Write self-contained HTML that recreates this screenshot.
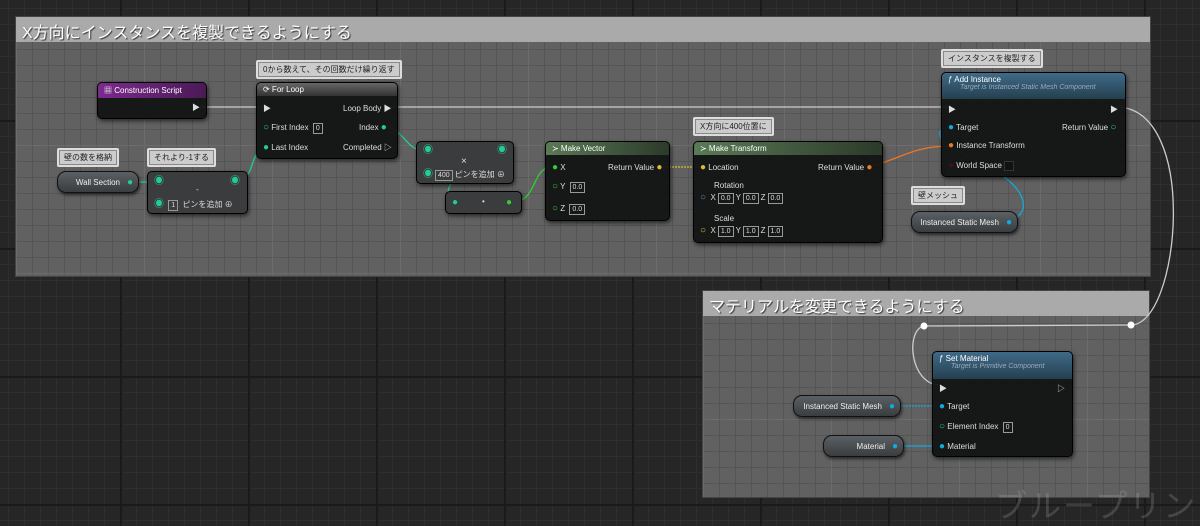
<!DOCTYPE html><html><head><meta charset="utf-8"><style>
*{margin:0;padding:0;box-sizing:border-box}
body{width:1200px;height:526px;overflow:hidden;position:relative;font-family:"Liberation Sans","Noto Sans CJK JP",sans-serif;color:#ddd;
background-color:#262626;
background-image:linear-gradient(#1a1a1a 2px,transparent 2px),linear-gradient(90deg,#1a1a1a 2px,transparent 2px),linear-gradient(#2e2e2e 1px,transparent 1px),linear-gradient(90deg,#2e2e2e 1px,transparent 1px);
background-size:128px 128px,128px 128px,16px 16px,16px 16px;background-position:-8px -8px}
.a{position:absolute}
.cb{position:absolute;background-color:#616161;background-image:linear-gradient(#6c6c6c 1px,transparent 1px),linear-gradient(90deg,#6c6c6c 1px,transparent 1px),linear-gradient(#555 1px,transparent 1px),linear-gradient(90deg,#555 1px,transparent 1px);background-size:128px 128px,128px 128px,16px 16px,16px 16px;box-shadow:0 0 0 1px #444}
.ch{position:absolute;left:0;right:0;top:0;height:25px;background:#aaaaaa;color:#fff;font-size:16px;padding:2px 6px;text-shadow:1px 1px 1px #333;white-space:nowrap}
.n{position:absolute;background:rgba(18,20,20,.95);border:1px solid #000;border-radius:5px;box-shadow:1px 2px 4px rgba(0,0,0,.6);font-size:8px;color:#ddd}
.h{position:absolute;left:0;right:0;top:0;border-radius:4px 4px 0 0;color:#fff;font-size:8px;padding:2px 6px}
.pill{position:absolute;border-radius:9px;background:linear-gradient(#5a6064,#3a3d3f);border:1px solid #111;box-shadow:1px 2px 3px rgba(0,0,0,.6);font-size:8px;color:#eee;text-align:right;padding:6px 18px 0 0}
.cm{position:absolute;background:#ddd;border-radius:2px;padding:2px;font-size:8px;color:#222}
.cm span{display:block;border:1px solid #888;background:#ccc;padding:1px 4px;white-space:nowrap}
.t{position:absolute;font-size:8px;white-space:nowrap}
.t span:first-child,.p{font-size:10px;line-height:8px}
.bx{display:inline-block;border:1px solid #999;padding:0 2px;font-size:7px !important;margin:0 2px;line-height:9px}
</style></head><body>
<div class="cb" style="left:16px;top:17px;width:1134px;height:259px"><div class="ch">X方向にインスタンスを複製できるようにする</div></div>
<div class="cb" style="left:703px;top:291px;width:446px;height:206px"><div class="ch">マテリアルを変更できるようにする</div></div>

<svg class="a" style="left:0;top:0" width="1200" height="526">
<g fill="none" stroke-width="1.3">
<path d="M200 107 L265 107" stroke="#ccc"/>
<path d="M390 107 L950 107" stroke="#ccc"/>
<path d="M1116 107 C1200 107,1180 325,1131 325 L924 326 C905 330,910 385,940 385" stroke="#ccc"/>
<path d="M127 182 L160 182" stroke="#2c9"/>
<path d="M233 182 C260 180,245 150,268 149" stroke="#2c9"/>
<path d="M386 127 C405 130,405 150,425 151" stroke="#2c9"/>
<path d="M505 151 C525 155,460 172,450 185 C445 195,452 203,458 204" stroke="#2c9"/>
<path d="M512 203 C540 200,530 165,555 167" stroke="#3c3"/>
<path d="M657 167 L705 167" stroke="#db3" stroke-dasharray="2 1"/>
<path d="M868 167 C900 160,910 146,952 146" stroke="#e72"/>
<path d="M952 127 C935 127,930 140,975 160 C1030 185,1035 215,1006 222" stroke="#1ad"/>
<path d="M888 406 L943 406" stroke="#1ad" stroke-dasharray="2 1"/>
<path d="M890 446 L943 446" stroke="#1ad"/>
</g>
<circle cx="924" cy="326" r="3.5" fill="#fff"/><circle cx="1131" cy="325" r="3.5" fill="#fff"/>
</svg>

<div class="n" style="left:97px;top:82px;width:110px;height:37px"><div class="h" style="background:linear-gradient(90deg,#7b2a8c,#4a1a55)">▦ Construction Script</div><div class="t" style="left:94px;top:19px">▶</div></div>
<div class="cm" style="left:256px;top:60px"><span>0から数えて、その回数だけ繰り返す</span></div>
<div class="n" style="left:256px;top:82px;width:142px;height:77px"><div class="h" style="background:linear-gradient(#666,#333)">⟳ For Loop</div>
<div class="t" style="left:6px;top:20px">▶</div><div class="t" style="left:86px;top:20px">Loop Body ▶</div>
<div class="t" style="left:6px;top:40px"><span style="color:#2c9">○</span> First Index <span class="bx">0</span></div><div class="t" style="left:102px;top:40px">Index <span class="p" style="color:#2c9">●</span></div>
<div class="t" style="left:6px;top:60px"><span style="color:#2c9">●</span> Last Index</div><div class="t" style="left:86px;top:59px">Completed ▷</div></div>
<div class="cm" style="left:57px;top:148px"><span>壁の数を格納</span></div>
<div class="pill" style="left:57px;top:171px;width:82px;height:22px">Wall Section <span class="p" style="color:#2c9;position:absolute;right:5px;top:7px">●</span></div>
<div class="cm" style="left:147px;top:148px"><span>それより-1する</span></div>
<div class="n" style="left:147px;top:171px;width:101px;height:43px;background:#3a3c3d">
<div class="t p" style="left:6px;top:6px;color:#2c9">◉</div><div class="t p" style="left:82px;top:6px;color:#2c9">◉</div><div class="t" style="left:48px;top:13px">-</div>
<div class="t" style="left:6px;top:27px"><span style="color:#2c9">◉</span> <span class="bx">1</span> ピンを追加 ⊕</div></div>
<div class="n" style="left:416px;top:141px;width:98px;height:43px;background:#3a3c3d">
<div class="t p" style="left:6px;top:5px;color:#2c9">◉</div><div class="t p" style="left:80px;top:5px;color:#2c9">◉</div><div class="t" style="left:44px;top:14px;font-size:10px">×</div>
<div class="t" style="left:6px;top:27px"><span style="color:#2c9">◉</span><span class="bx">400</span>ピンを追加 ⊕</div></div>
<div class="n" style="left:445px;top:191px;width:77px;height:23px;background:#3a3c3d"><div class="t p" style="left:6px;top:7px;color:#2c9">●</div><div class="t" style="left:36px;top:5px">•</div><div class="t p" style="left:60px;top:7px;color:#3c3">●</div></div>
<div class="n" style="left:545px;top:141px;width:125px;height:80px"><div class="h" style="background:linear-gradient(90deg,#5a7a55,#2c3a2a)">≻ Make Vector</div>
<div class="t" style="left:6px;top:21px"><span style="color:#3c3">●</span> X</div><div class="t" style="left:62px;top:21px">Return Value <span class="p" style="color:#db3">●</span></div>
<div class="t" style="left:6px;top:40px"><span style="color:#3c3">○</span> Y <span class="bx">0.0</span></div>
<div class="t" style="left:6px;top:62px"><span style="color:#3c3">○</span> Z <span class="bx">0.0</span></div></div>
<div class="cm" style="left:693px;top:117px"><span>X方向に400位置に</span></div>
<div class="n" style="left:693px;top:141px;width:190px;height:102px"><div class="h" style="background:linear-gradient(90deg,#5a7a55,#2c3a2a)">≻ Make Transform</div>
<div class="t" style="left:6px;top:21px"><span style="color:#db3">●</span> Location</div><div class="t" style="left:124px;top:21px">Return Value <span class="p" style="color:#e72">●</span></div>
<div class="t" style="left:20px;top:39px">Rotation</div><div class="t" style="left:6px;top:51px"><span style="color:#68c">○</span> &nbsp;X<span class="bx">0.0</span>Y<span class="bx">0.0</span>Z<span class="bx">0.0</span></div>
<div class="t" style="left:20px;top:72px">Scale</div><div class="t" style="left:6px;top:84px"><span style="color:#db3">○</span> &nbsp;X<span class="bx">1.0</span>Y<span class="bx">1.0</span>Z<span class="bx">1.0</span></div></div>
<div class="cm" style="left:941px;top:49px"><span>インスタンスを複製する</span></div>
<div class="n" style="left:941px;top:72px;width:185px;height:105px"><div class="h" style="background:linear-gradient(#3f6a88,#25404f);height:26px">ƒ Add Instance<div style="font-style:italic;color:#9ab;font-size:7px;margin-left:12px">Target is Instanced Static Mesh Component</div></div>
<div class="t" style="left:6px;top:31px">▶</div><div class="t" style="left:168px;top:31px">▶</div>
<div class="t" style="left:6px;top:50px"><span style="color:#1ad">●</span> Target</div><div class="t" style="left:120px;top:50px">Return Value <span class="p" style="color:#2c9">○</span></div>
<div class="t" style="left:6px;top:68px"><span style="color:#e72">●</span> Instance Transform</div>
<div class="t" style="left:6px;top:88px"><span style="color:#411">●</span> World Space <span style="display:inline-block;width:10px;height:10px;background:#111;border:1px solid #333;vertical-align:middle"></span></div></div>
<div class="cm" style="left:911px;top:186px"><span>壁メッシュ</span></div>
<div class="pill" style="left:911px;top:211px;width:107px;height:22px">Instanced Static Mesh <span class="p" style="color:#1ad;position:absolute;right:5px;top:7px">●</span></div>
<div class="n" style="left:932px;top:351px;width:141px;height:106px"><div class="h" style="background:linear-gradient(#3f6a88,#25404f);height:27px">ƒ Set Material<div style="font-style:italic;color:#9ab;font-size:7px;margin-left:12px">Target is Primitive Component</div></div>
<div class="t" style="left:6px;top:31px">▶</div><div class="t" style="left:124px;top:31px">▷</div>
<div class="t" style="left:6px;top:50px"><span style="color:#1ad">●</span> Target</div>
<div class="t" style="left:6px;top:70px"><span style="color:#2c9">○</span> Element Index <span class="bx">0</span></div>
<div class="t" style="left:6px;top:90px"><span style="color:#1ad">●</span> Material</div></div>
<div class="pill" style="left:793px;top:395px;width:108px;height:22px">Instanced Static Mesh <span class="p" style="color:#1ad;position:absolute;right:5px;top:7px">●</span></div>
<div class="pill" style="left:823px;top:435px;width:81px;height:22px">Material <span class="p" style="color:#1ad;position:absolute;right:5px;top:7px">●</span></div>
<div class="a" style="left:995px;top:486px;font-size:32px;line-height:40px;color:rgba(200,200,200,.2);white-space:nowrap;letter-spacing:2px">ブループリン</div>
</body></html>
